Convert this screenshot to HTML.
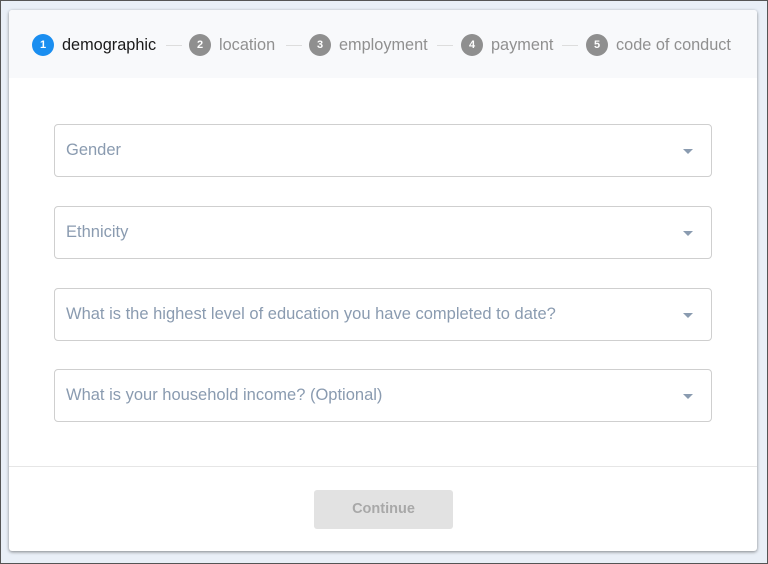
<!DOCTYPE html>
<html><head><meta charset="utf-8"><style>
html,body{margin:0;padding:0}
body{width:766px;height:562px;border:1px solid #555;background:#e9eff7;position:relative;overflow:hidden;font-family:"Liberation Sans",sans-serif}
.card{position:absolute;left:8px;top:9px;width:748px;height:541px;background:#fff;border-radius:3px;box-shadow:0 1px 3px rgba(0,0,0,.45);overflow:hidden}
.hdr{height:68px;background:#f8f9fb;position:relative}
.step{position:absolute;top:24px;display:flex;align-items:center;font-size:16.3px;color:#909090;white-space:nowrap}
.c{width:22px;height:22px;border-radius:50%;background:#8f8f8f;color:#fff;font-size:11px;display:flex;align-items:center;justify-content:center;margin-right:8px;font-weight:bold}
.ln{position:absolute;top:35px;height:1px;background:#ddd;width:16px}
.f{position:absolute;left:45px;width:658px;height:53px;border:1px solid #cfcfcf;border-radius:4px;box-sizing:border-box;font-size:16.5px;color:#8a9bb0;padding-left:11px;line-height:51px}
.f:after{content:"";position:absolute;right:18px;top:24px;border-left:5px solid transparent;border-right:5px solid transparent;border-top:5px solid #8a9bb0}
.div{position:absolute;left:0;right:0;top:456px;height:1px;background:#e6e6e6}
.btn{position:absolute;left:305px;top:480px;width:139px;height:39px;background:#e2e2e2;border-radius:3px;color:#a8a8a8;font-weight:bold;font-size:14.5px;text-align:center;line-height:39px}
</style></head><body>
<div class="card">
<div class="hdr">
<div class="step" style="left:23px;color:#1a1a1a"><span class="c" style="background:#1a8ef0">1</span>demographic</div>
<div class="ln" style="left:157px"></div>
<div class="step" style="left:180px"><span class="c">2</span>location</div>
<div class="ln" style="left:277px"></div>
<div class="step" style="left:300px"><span class="c">3</span>employment</div>
<div class="ln" style="left:428px"></div>
<div class="step" style="left:452px"><span class="c">4</span>payment</div>
<div class="ln" style="left:553px"></div>
<div class="step" style="left:577px"><span class="c">5</span>code of conduct</div>
</div>
<div class="f" style="top:114px">Gender</div>
<div class="f" style="top:196px">Ethnicity</div>
<div class="f" style="top:278px">What is the highest level of education you have completed to date?</div>
<div class="f" style="top:359px">What is your household income? (Optional)</div>
<div class="div"></div>
<div class="btn">Continue</div>
</div>
</body></html>
